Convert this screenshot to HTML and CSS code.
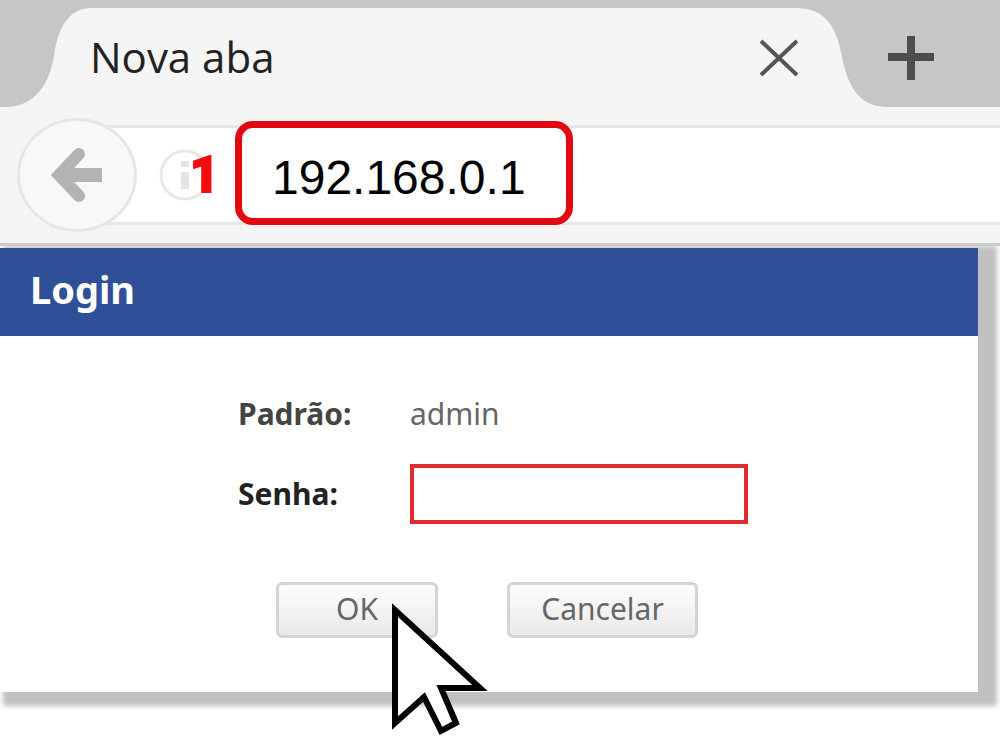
FILE: index.html
```html
<!doctype html>
<html lang="pt-BR">
<head>
   <title>Nova aba</title>
   <meta charset="utf-8">
   <meta name="viewport" content="width=device-width, initial-scale=1.0">
   <link rel="stylesheet" href="styles.css">
</head>
<body>

   <header class="browser">
      <div class="tabs">
         <svg class="tab-edge" width="90" height="99" viewBox="0 0 90 99" aria-hidden="true">
            <path d="M0 99H8C36 97 49 76 54 48C58 20 68 1 90 0V99Z" fill="#f5f5f5"/>
         </svg>
         <div class="tab">
            <span>Nova aba</span>
            <button class="icon-btn" type="button" aria-label="Fechar aba">
               <svg width="40" height="38" viewBox="0 0 40 38"><path d="M3 3L39 37M39 3L3 37" stroke="#555" stroke-width="4"/></svg>
            </button>
         </div>
         <svg class="tab-edge" width="90" height="99" viewBox="0 0 90 99" aria-hidden="true">
            <path d="M0 0C27 1 38 19 43 44C49 76 59 98 88 99H0Z" fill="#f5f5f5"/>
         </svg>
         <button class="icon-btn" type="button" aria-label="Abrir nova aba">
            <svg width="46" height="44" viewBox="0 0 46 44"><path d="M0 21H46M23 0V44" stroke="#4d4d4d" stroke-width="8"/></svg>
         </button>
      </div>

      <div class="toolbar">
         <button class="back" type="button" aria-label="Voltar">
            <svg width="52" height="56" viewBox="0 0 52 56"><path d="M28 7L8 28L28 49" fill="none" stroke="#b3b3b3" stroke-width="12" stroke-linecap="round"/><path d="M10 28H51" stroke="#b3b3b3" stroke-width="14"/></svg>
         </button>
         <div class="address">
            <svg class="info" width="52" height="52" viewBox="0 0 52 52" aria-hidden="true">
               <circle cx="26" cy="26" r="24" fill="#fff" stroke="#e8e8e8" stroke-width="3"/>
               <path d="M26 12V18M26 23V40" stroke="#e4e4e4" stroke-width="8"/>
            </svg>
            <span class="step">1</span>
            <input class="url" type="text" value="192.168.0.1" aria-label="Endereço">
         </div>
      </div>
   </header>

   <main>
      <form class="login">
         <h1>Login</h1>
         <div class="fields">
            <span class="label">Padrão:</span>
            <span class="user">admin</span>
            <label class="label dark" for="senha">Senha:</label>
            <input id="senha" class="password" type="password">
         </div>
         <div class="actions">
            <div class="pointed">
               <button class="btn ok" type="button">OK</button>
               <svg class="cursor" width="100" height="140" viewBox="0 0 100 140" aria-hidden="true">
                  <path d="M4 11V124L33 98L50 132L65 124L50 89H89Z" fill="#fff" stroke="#000" stroke-width="6" stroke-miterlimit="8"/>
               </svg>
            </div>
            <button class="btn cancel" type="button">Cancelar</button>
         </div>
      </form>
   </main>

</body>
</html>
```

FILE: styles.css
```css
*{
   box-sizing: border-box;
}

body{
   min-height: 100vh;
   margin: 0;
   background: #fff;
   font-family: "Noto Sans", sans-serif;
}

button, input{
   font-family: inherit;
   margin: 0;
}

/* browser */
.browser{
   position: relative;
   z-index: 1;
   background: #f5f5f5;
   border-bottom: 3px solid #ccc;
}

.tabs{
   display: flex;
   align-items: center;
   padding-top: 8px;
   background: #c6c6c6;
}

.tab-edge{
   display: block;
   flex: none;
}

.tab{
   display: flex;
   flex: 0 1 708px;
   align-items: center;
   justify-content: space-between;
   height: 99px;
   padding-bottom: 2px;
   background: #f5f5f5;
   color: #222;
   font-family: "Open Sans", sans-serif;
   font-size: 42px;
}

.icon-btn{
   display: flex;
   padding: 0;
   border: 0;
   background: none;
}

.toolbar{
   display: flex;
   align-items: center;
   height: 136px;
   padding-left: 17px;
}

.back{
   position: relative;
   z-index: 1;
   display: flex;
   flex: none;
   align-items: center;
   justify-content: center;
   width: 120px;
   height: 114px;
   padding: 0;
   border: 3px solid #e6e6e6;
   border-radius: 50%;
   background: #f8f8f8;
}

.address{
   display: flex;
   flex: 1;
   align-items: center;
   height: 100px;
   margin-left: -60px;
   padding-left: 82px;
   border: solid #e6e6e6;
   border-width: 3px 0;
   background: #fff;
}

.info{
   flex: none;
}

.step{
   width: 27px;
   margin: 0 18px 0 -21px;
   color: #f20d0d;
   font: 900 50px/1 Roboto, sans-serif;
   -webkit-text-stroke: 2px #f20d0d;
   stroke-linejoin: round;
}

.url{
   flex: 0 1 338px;
   min-width: 0;
   height: 104px;
   margin-bottom: 5px;
   padding: 10px 30px 0;
   border: 7px solid #e3080f;
   border-radius: 18px;
   background: #fff;
   color: #000;
   font-family: "Liberation Sans", sans-serif;
   font-size: 48px;
}

/* login dialog */
.login{
   margin: 2px 22px 0 0;
   padding-bottom: 54px;
   background: #fff;
   box-shadow: 11px 6px 5px 8px #c0c0c0;
}

.login h1{
   height: 88px;
   margin: 0;
   padding: 0 30px;
   background: #2f5098;
   color: #fff;
   font-size: 38px;
   line-height: 82px;
}

.fields{
   display: grid;
   grid-template-columns: 172px 338px;
   justify-content: center;
   align-items: center;
   row-gap: 30px;
   padding: 58px 0 0 8px;
   font-size: 30px;
   line-height: 40px;
}

.label{
   color: #444;
   font-weight: bold;
}

.dark{
   color: #222;
}

.user{
   color: #666;
}

.password{
   width: 100%;
   height: 60px;
   padding: 0 12px;
   border: 4px solid #e02b2f;
   background: #fff;
   font-size: 28px;
}

.actions{
   display: flex;
   justify-content: center;
   gap: 69px;
   padding: 58px 4px 0 0;
}

.pointed{
   position: relative;
}

.btn{
   display: block;
   height: 56px;
   padding: 0 0 4px;
   border: 3px solid #d4d4d4;
   border-radius: 6px;
   background: linear-gradient(#fdfdfd, #e9e9e9);
   color: #666;
   font-size: 30px;
}

.ok{
   width: 162px;
}

.cancel{
   width: 191px;
}

.cursor{
   position: absolute;
   top: 17px;
   left: 115px;
}
```
